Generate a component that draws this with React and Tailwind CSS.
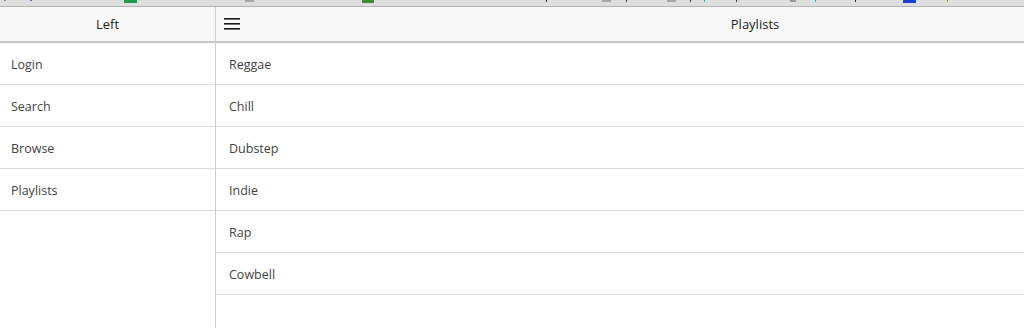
const menuItems = ['Login', 'Search', 'Browse', 'Playlists'];
const playlists = ['Reggae', 'Chill', 'Dubstep', 'Indie', 'Rap', 'Cowbell'];

function TopStrip() {
  // leftover sliver of the browser bookmark bar
  return (
    <svg width="1024" height="6" className="block bg-[#dedede]">
      <rect x="124" y="0" width="13" height="3" fill="#1e9e4a" />
      <rect x="245" y="0" width="9" height="2" fill="#a8a8a8" />
      <rect x="362" y="0" width="12" height="3" fill="#3a8f2c" />
      <rect x="602" y="0" width="9" height="2" fill="#a8a8a8" />
      <rect x="667" y="0" width="9" height="2" fill="#a8a8a8" />
      <rect x="903" y="0" width="13" height="3" fill="#1d3fc9" />
      <rect x="4" y="0" width="2" height="1" fill="#888" />
      <rect x="30" y="0" width="2" height="1" fill="#4a6fb0" />
      <rect x="546" y="0" width="1" height="2" fill="#222" />
      <rect x="626" y="0" width="1" height="2" fill="#444" />
      <rect x="690" y="0" width="1" height="2" fill="#444" />
      <rect x="704" y="0" width="1" height="2" fill="#3aa3c9" />
      <rect x="736" y="0" width="1" height="2" fill="#444" />
      <rect x="790" y="0" width="6" height="2" fill="#999" />
      <rect x="815" y="0" width="1" height="2" fill="#3aa3c9" />
      <rect x="855" y="0" width="1" height="2" fill="#222" />
      <rect x="947" y="0" width="1" height="2" fill="#b07a20" />
    </svg>
  );
}

function Hamburger() {
  return (
    <svg width="16" height="13" viewBox="0 0 16 13" className="block">
      <rect x="0" y="0" width="16" height="1.6" fill="#1a1a1a" />
      <rect x="0" y="5" width="16" height="1.6" fill="#1a1a1a" />
      <rect x="0" y="10" width="16" height="1.6" fill="#1a1a1a" />
    </svg>
  );
}

export default function App() {
  return (
    <div className="w-[1024px] h-[328px] overflow-hidden bg-white font-['Open_Sans',sans-serif]">
      <TopStrip />
      <div className="h-px bg-[#b4b4b4]" />
      <div className="flex h-[321px]">
        {/* Left menu */}
        <div className="w-[216px] shrink-0 border-r border-[#cfcfcf]">
          <div className="h-[36px] flex items-center justify-center pt-[2px] bg-[#f8f8f8] border-b-2 border-[#c6c6c6] text-[13px] font-medium text-[#222]">
            Left
          </div>
          {menuItems.map((item) => (
            <div key={item} className="h-[42px] flex items-center pl-[11px] pt-[3px] border-b border-[#dcdcdc] text-[12.5px] text-[#444]">
              {item}
            </div>
          ))}
        </div>

        {/* Content */}
        <div className="flex-1">
          <div className="h-[36px] flex items-center bg-[#f8f8f8] border-b-2 border-[#c6c6c6]">
            <button className="ml-[8px] mt-[1px] flex items-center">
              <Hamburger />
            </button>
            <div className="flex-1 pl-[246px] pt-[2px] text-center text-[13px] font-medium text-[#222]">
              Playlists
            </div>
          </div>
          {playlists.map((item) => (
            <div key={item} className="h-[42px] flex items-center pl-[13px] pt-[3px] border-b border-[#dcdcdc] text-[12.5px] text-[#444]">
              {item}
            </div>
          ))}
        </div>
      </div>
    </div>
  );
}
